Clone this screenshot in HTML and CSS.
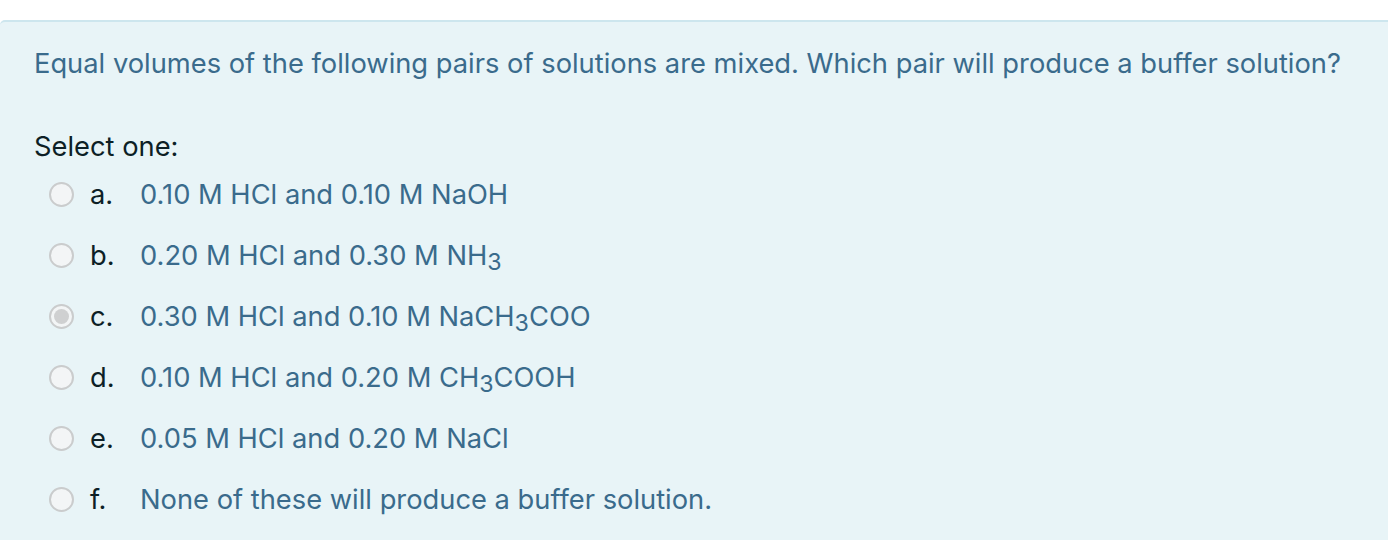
FILE: index.html
```html
<!DOCTYPE html>
<html>
<head>
<meta charset="utf-8">
<link rel="stylesheet" href="styles.css">
</head>
<body>
<div class="formulation">
  <div class="qtext">Equal volumes of the following pairs of solutions are mixed. Which pair will produce a buffer solution?</div>
  <div class="prompt">Select one:</div>
  <div class="answers">
    <div class="row"><span class="radio"></span><span class="letter">a.</span><span class="opt">0.10 M HCl and 0.10 M NaOH</span></div>
    <div class="row"><span class="radio"></span><span class="letter">b.</span><span class="opt">0.20 M HCl and 0.30 M NH<sub>3</sub></span></div>
    <div class="row"><span class="radio checked"></span><span class="letter">c.</span><span class="opt">0.30 M HCl and 0.10 M NaCH<sub>3</sub>COO</span></div>
    <div class="row"><span class="radio"></span><span class="letter">d.</span><span class="opt">0.10 M HCl and 0.20 M CH<sub>3</sub>COOH</span></div>
    <div class="row"><span class="radio"></span><span class="letter">e.</span><span class="opt">0.05 M HCl and 0.20 M NaCl</span></div>
    <div class="row"><span class="radio"></span><span class="letter">f.</span><span class="opt">None of these will produce a buffer solution.</span></div>
  </div>
</div>
</body>
</html>
```
FILE: styles.css
```css
html, body {
  margin: 0;
  padding: 0;
  background: #ffffff;
}
body {
  font-family: Inter, "Liberation Sans", Arial, sans-serif;
  font-size: 27.3px;
  color: #0d1f26;
}
.formulation {
  margin-top: 20px;
  height: 520px;
  box-sizing: border-box;
  background: #e8f4f7;
  border-top: 2px solid #cde6ee;
  border-top-left-radius: 5px;
  padding: 21px 0 0 34px;
}
.qtext {
  color: #3a6b8c;
  line-height: 42px;
}
.prompt {
  margin-top: 45px;
  line-height: 34px;
}
.answers {
  display: flex;
  flex-direction: column;
}
.row {
  display: flex;
  align-items: center;
  height: 61px;
}
.radio {
  width: 21px;
  height: 21px;
  border: 2px solid #cacccd;
  border-radius: 50%;
  background: #f3f5f6;
  margin-left: 15px;
  flex: none;
  display: flex;
  align-items: center;
  justify-content: center;
}
.radio.checked::after {
  content: "";
  width: 15px;
  height: 15px;
  border-radius: 50%;
  background: #cfd0d1;
}
.letter {
  margin-left: 16px;
  width: 50px;
}
.opt {
  color: #3a6b8c;
}
sub {
  font-size: 0.85em;
  vertical-align: -0.2em;
  line-height: 0;
}
```
